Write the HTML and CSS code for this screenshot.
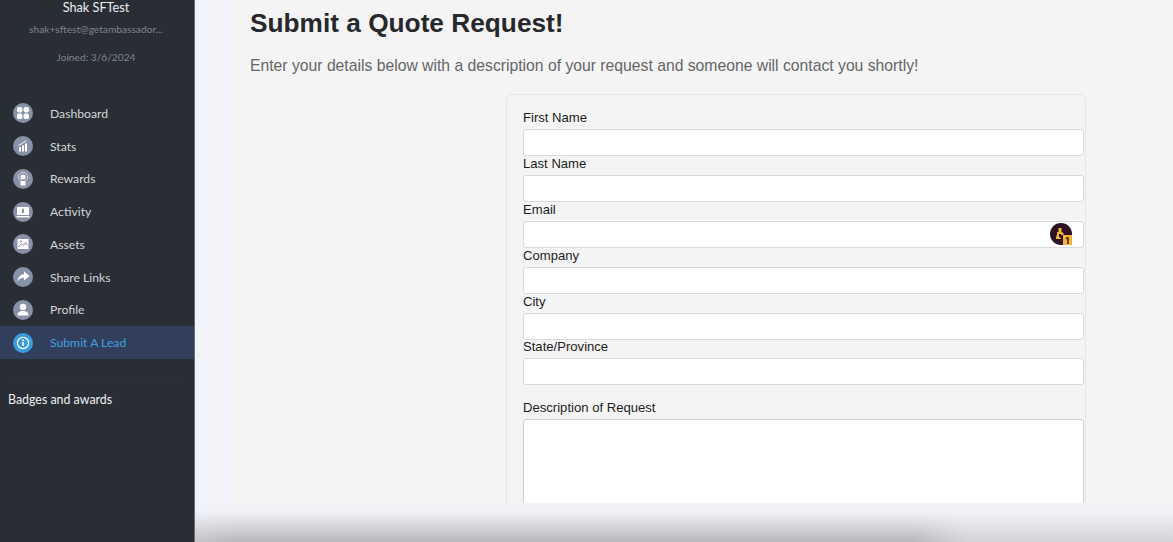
FILE: index.html
```html
<!DOCTYPE html>
<html lang="en">
<head>
<meta charset="utf-8">
<title>Submit a Quote Request</title>
<link rel="stylesheet" href="styles.css">
</head>
<body>
<aside class="sidebar">
  <div class="user">
    <div class="user-name">Shak SFTest</div>
    <div class="user-mail">shak+sftest@getambassador...</div>
    <div class="user-joined">Joined: 3/6/2024</div>
  </div>
  <nav class="nav">
    <a class="nav-item"><span class="nav-icon"><svg viewBox="0 0 20 20"><rect x="4" y="4" width="5.4" height="5.4" rx="1.8"/><rect x="10.6" y="4" width="5.4" height="5.4" rx="1.8"/><rect x="4" y="10.600" width="5.4" height="5.4" rx="1.8"/><rect x="10.6" y="10.600" width="5.4" height="5.4" rx="1.8"/></svg></span>Dashboard</a>
    <a class="nav-item"><span class="nav-icon"><svg viewBox="0 0 20 20"><rect x="6" y="11" width="2" height="4.5"/><rect x="9" y="9.5" width="2" height="6"/><rect x="12" y="7.5" width="2" height="8"/><path d="M5.500 9.500 L9 7.500 L13 4.800" fill="none" stroke="#fff" stroke-width="1"/></svg></span>Stats</a>
    <a class="nav-item"><span class="nav-icon"><svg viewBox="0 0 20 20"><circle cx="10" cy="8" r="4.6" fill="none" stroke="#c9cedb" stroke-width="1"/><circle cx="10" cy="8" r="2.6"/><path d="M7.500 12h5v4.500h-5z"/></svg></span>Rewards</a>
    <a class="nav-item"><span class="nav-icon"><svg viewBox="0 0 20 20"><rect x="4" y="5" width="12" height="8" rx=".6"/><rect x="3.500" y="14" width="13" height="1.400"/><rect x="9" y="6.800" width="2" height="4.200" fill="#8791a8"/></svg></span>Activity</a>
    <a class="nav-item"><span class="nav-icon"><svg viewBox="0 0 20 20"><path d="M4.500 5h11v10h-11z"/><path d="M5.500 13l3-3.500 2 2 2-3 2 3" fill="none" stroke="#8791a8" stroke-width="1"/><circle cx="8" cy="7.400" r="1" fill="#8791a8"/></svg></span>Assets</a>
    <a class="nav-item"><span class="nav-icon"><svg viewBox="0 0 20 20"><path d="M11 4.500 L16.500 9 L11 13.500 V10.800 C8 10.800 6 11.800 4.500 14.500 C4.800 10.500 7 7.600 11 7.200 Z"/></svg></span>Share Links</a>
    <a class="nav-item"><span class="nav-icon"><svg viewBox="0 0 20 20"><circle cx="10" cy="7" r="3.200"/><path d="M4.500 15.500 C4.500 12 7 11 10 11 C13 11 15.500 12 15.500 15.500 Z"/></svg></span>Profile</a>
    <a class="nav-item is-active"><span class="nav-icon"><svg viewBox="0 0 20 20"><circle cx="10" cy="10" r="5.600" fill="none" stroke="#fff" stroke-width="1.200"/><rect x="9.200" y="9" width="1.600" height="4"/><circle cx="10" cy="7.200" r="1"/></svg></span>Submit A Lead</a>
  </nav>
  <div class="badges">Badges and awards</div>
</aside>
<div class="main">
  <main class="content">
    <h1 class="title">Submit a Quote Request!</h1>
    <p class="intro">Enter your details below with a description of your request and someone will contact you shortly!</p>
    <form class="card">
      <label class="field"><span>First Name</span><input class="input" type="text"></label>
      <label class="field"><span>Last Name</span><input class="input" type="text"></label>
      <label class="field field-email"><span>Email</span><input class="input" type="text">
        <svg class="pm-icon" viewBox="0 0 23 23"><circle cx="11" cy="11" r="11" fill="#2e1423"/><path d="M8.500 5h3v4l2 1v2h-2.500v-1H9v3l2 1v1H6v-2l1-2V9h1.500z" fill="#f4b33a"/><rect x="13" y="12" width="9" height="10" fill="#f4b33a"/><path d="M17 14h1.800v7H17v-5l-1.200.6v-1.500z" fill="#5a3a10"/></svg>
      </label>
      <label class="field"><span>Company</span><input class="input" type="text"></label>
      <label class="field"><span>City</span><input class="input" type="text"></label>
      <label class="field"><span>State/Province</span><input class="input" type="text"></label>
      <label class="field field-desc"><span>Description of Request</span><textarea class="textarea"></textarea></label>
    </form>
  </main>
  <div class="fade"></div>
</div>
</body>
</html>
```
FILE: styles.css
```css
* { box-sizing: border-box; }
html, body { margin: 0; height: 100%; }
body {
  display: flex;
  height: 542px;
  overflow: hidden;
  background: #f2f3f9;
  font-family: "Liberation Sans", Arial, sans-serif;
}
.sidebar {
  flex: 0 0 195px;
  background: #292e35;
  border-right: 1px solid #6b6e74;
  color: #e4e6ea;
  font-family: Lato, "Open Sans", sans-serif;
}
.user { text-align: center; padding-right: 2px; }
.user-name { font-size: 12.7px; line-height: 15px; color: #eceef0; }
.user-mail { margin-top: 7px; font-size: 10.2px; line-height: 14px; color: #7f838a; }
.user-joined { margin-top: 14px; font-size: 10.2px; line-height: 14px; color: #7f838a; }
.nav { margin-top: 33px; }
.nav-item {
  display: flex;
  align-items: center;
  height: 32.75px;
  padding-left: 13px;
  font-size: 12.2px;
  color: #d3d5d9;
}
.nav-icon {
  flex: none;
  width: 20px;
  height: 20px;
  margin-right: 17px;
  border-radius: 50%;
  background: #8791a8;
}
.nav-icon svg { display: block; width: 20px; height: 20px; fill: #fff; }
.nav-item.is-active { background: #323f5c; color: #3f9fe0; }
.nav-item.is-active .nav-icon { background: #3b9bdc; }
.badges {
  margin: 20px 11px 0 8px;
  padding-top: 12px;
  border-top: 1px solid #2e333b;
  font-size: 12.4px;
  line-height: 16px;
  color: #eceef0;
}
.main { flex: 1; min-width: 0; display: flex; flex-direction: column; }
.content {
  flex: 0 0 503px;
  margin-left: 37px;
  padding-left: 18px;
  overflow: hidden;
  background: #f4f4f4;
}
.title { margin: 8px 0 0; font-size: 26.25px; line-height: 31px; font-weight: 700; color: #26282b; }
.intro { margin: 17px 0 0; font-size: 15.72px; line-height: 20px; color: #666; }
.card {
  width: 580px;
  margin: 18px 0 0 256px;
  padding: 15.4px 1px 0 16px;
  border: 1px solid #e6e6e6;
  border-radius: 6px;
}
.field { position: relative; display: block; height: 45.8px; font-size: 13.1px; line-height: 15px; color: #1c1c1c; }
.field span { display: block; height: 19px; }
.input {
  display: block;
  width: 100%;
  height: 27px;
  border: 1px solid #d9d9d9;
  border-radius: 3px;
  background: #fff;
}
.field-desc { height: auto; margin-top: 15px; }
.textarea {
  display: block;
  width: 100%;
  height: 150px;
  border: 1px solid #cfcfcf;
  border-radius: 3px;
  background: #fff;
  resize: none;
}
.pm-icon { position: absolute; top: 21px; right: 11px; width: 23px; height: 23px; }
.fade {
  flex: 1;
  background:
    linear-gradient(90deg, rgba(242,243,249,.2) 0, rgba(242,243,249,0) 40px, rgba(242,243,249,0) 720px, rgba(242,243,249,.45) 770px, rgba(242,243,249,.45) 100%),
    linear-gradient(180deg, #f2f3f9 0, #f2f3f9 8px, #b8b8bc 100%);
}
```
